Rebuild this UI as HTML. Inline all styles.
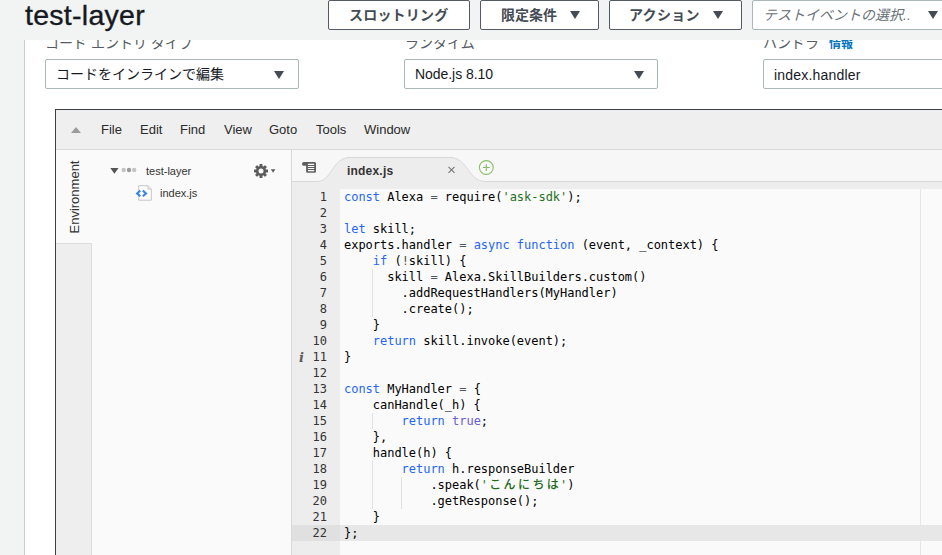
<!DOCTYPE html>
<html lang="ja">
<head>
<meta charset="utf-8">
<title>test-layer</title>
<style>
*{box-sizing:border-box;margin:0;padding:0}
html,body{width:942px;height:555px;overflow:hidden;background:#f2f3f3}
body{position:relative;font-family:"Liberation Sans","Noto Sans CJK JP",sans-serif;color:#16191f}
.abs{position:absolute}
/* page panel */
#panel{left:24px;top:40px;width:930px;height:530px;background:#fff;border-left:1px solid #c9cfcf}
/* header */
#hdr{left:0;top:0;width:942px;height:40px;background:#f2f3f3}
#title{left:25px;top:-3px;font-size:28.5px;line-height:36px;color:#16191f;white-space:nowrap;letter-spacing:.28px;-webkit-text-stroke:.35px #16191f}
.btn{top:0;height:30px;background:#fff;border:1px solid #545b64;border-radius:2px;color:#444b54;font-weight:bold;font-size:14px;line-height:28px;white-space:nowrap}
.btn span{position:absolute;top:0}
.tri{position:absolute;width:0;height:0;border-left:5.5px solid transparent;border-right:5.5px solid transparent;border-top:8px solid #444b54}
.lbl{font-size:14px;line-height:20px;color:#545b64;white-space:nowrap}
.sel{height:30px;background:#fff;border:1px solid #aab7b8;border-radius:2px;font-size:14px;line-height:28px;white-space:nowrap;color:#16191f}
.sel span{position:absolute;top:0}
/* IDE */
#ide{left:55px;top:109px;width:900px;height:460px;background:#fafafa;border-left:1px solid #3a3f46;border-top:1px solid #3a3f46}
#menubar{left:0;top:0;width:900px;height:40px;background:#efefef;border-bottom:1px solid #d9d9d9}
.mi{top:12px;font-size:13px;line-height:16px;color:#2a2a2a;white-space:nowrap}
#envcol{left:0;top:40px;width:36px;height:420px;background:#eeeeee;border-right:1px solid #dcdcdc}
#envtab{left:0;top:0;width:36px;height:94px;background:#fafafa;border-bottom:1px solid #dcdcdc}
#envtxt{left:0;top:0;width:36px;height:94px}
#tree{left:36px;top:40px;width:200px;height:420px;background:#fafafa}
.tl{font-size:11px;line-height:14px;color:#333;white-space:nowrap}
#split{left:235px;top:40px;width:1px;height:420px;background:#d9d9d9}
#tabbar{left:236px;top:40px;width:664px;height:32px;background:#f7f7f7}
#edtop{left:236px;top:72px;width:664px;height:7px;background:#ededed}
#gutter{left:236px;top:79px;width:48px;height:381px;background:#ededed}
#code{left:284px;top:79px;width:616px;height:381px;background:#fafafa;border-top-left-radius:4px}
.mono{font-family:"DejaVu Sans Mono","Liberation Mono","Noto Sans CJK JP",monospace;font-size:12px;line-height:16px;white-space:pre;letter-spacing:-0.024px}
.ln{left:0;width:35px;height:16px;text-align:right;color:#333}
.cl{left:4px;height:16px;color:#000}
.k{color:#2466f2}
.s{color:#1f7021}
.c{color:#6a5bd6}
.o{color:#4a5560}
.ig{width:1px;background:#e0e0e0}
.j{display:inline-block;width:14.4px;text-align:center;letter-spacing:0;font-weight:500;color:#1c6a1c}
</style>
</head>
<body>
<div id="panel" class="abs"></div>

<!-- form row -->
<div class="abs lbl" style="left:45px;top:34px;transform:translateY(-.75px)">コード エントリ タイプ</div>
<div class="abs sel" style="left:45px;top:59px;width:254px"><span style="left:10px">コードをインラインで編集</span><i class="tri" style="left:228px;top:11px"></i></div>
<div class="abs lbl" style="left:405px;top:34px;transform:translateY(-.75px)">ランタイム</div>
<div class="abs sel" style="left:404px;top:59px;width:254px"><span style="left:10px;letter-spacing:-.05px">Node.js 8.10</span><i class="tri" style="left:229px;top:11px"></i></div>
<div class="abs lbl" style="left:763px;top:34px;transform:translateY(-.75px)">ハンドラ <b style="font-size:12px;color:#0073bb;margin-left:6px;position:relative;top:0px">情報</b></div>
<div class="abs sel" style="left:763px;top:59px;width:200px"><span style="left:10px;top:1px;letter-spacing:.2px">index.handler</span></div>

<!-- header (covers top of form row) -->
<div id="hdr" class="abs"></div>
<div id="title" class="abs">test-layer</div>
<div class="abs btn" style="left:328px;width:142px"><span style="left:20px;letter-spacing:.2px">スロットリング</span></div>
<div class="abs btn" style="left:480px;width:119px"><span style="left:20px">限定条件</span><i class="tri" style="left:89px;top:10px"></i></div>
<div class="abs btn" style="left:609px;width:133px"><span style="left:19px;letter-spacing:.3px">アクション</span><i class="tri" style="left:103px;top:10px"></i></div>
<div class="abs sel" style="left:752px;top:0;width:200px;color:#687078;font-style:italic"><span style="left:10px">テストイベントの選択..</span><i class="tri" style="left:175px;top:10px"></i></div>

<!-- IDE -->
<div id="ide" class="abs">
  <div id="menubar" class="abs">
    <i class="abs" style="left:15px;top:17px;width:0;height:0;border-left:5.500px solid transparent;border-right:5.500px solid transparent;border-bottom:6px solid #9c9c9c"></i>
    <div class="abs mi" style="left:45px">File</div>
    <div class="abs mi" style="left:84px">Edit</div>
    <div class="abs mi" style="left:124px">Find</div>
    <div class="abs mi" style="left:168px">View</div>
    <div class="abs mi" style="left:213px">Goto</div>
    <div class="abs mi" style="left:260px">Tools</div>
    <div class="abs mi" style="left:308px">Window</div>
  </div>
  <div id="envcol" class="abs">
    <div id="envtab" class="abs"></div>
    <svg id="envtxt" class="abs" width="36" height="94" viewBox="0 0 36 94"><text x="0" y="0" transform="translate(22.500 83.500) rotate(-90)" font-family="Liberation Sans, sans-serif" font-size="13" fill="#333">Environment</text></svg>
  </div>
  <div id="tree" class="abs">
    <svg class="abs" style="left:16px;top:14px" width="32" height="12" viewBox="0 0 32 12">
      <path d="M2.300 4h8.200l-4.100 5.800z" fill="#555"/>
      <circle cx="15.700" cy="6" r="2.200" fill="#c4c4c4"/><circle cx="21" cy="6" r="2.200" fill="#9a9a9a"/><circle cx="26.200" cy="6" r="2.200" fill="#c4c4c4"/>
    </svg>
    <div class="abs tl" style="left:54px;top:14px">test-layer</div>
    <svg class="abs" style="left:43px;top:35px" width="19" height="17" viewBox="0 0 19 17">
      <path d="M3.700 .700H13L16.300 4V15.200H3.700z" fill="#fdfdfd" stroke="#c6c6c6" stroke-width="1"/>
      <path d="M13 .700V4H16.300" fill="#ededed" stroke="#c6c6c6" stroke-width="1"/>
      <path d="M5.300 5.500L2.100 8.400l3.200 2.900M7.800 5.500L11 8.400l-3.200 2.900" fill="none" stroke="#3a86e6" stroke-width="2.100"/>
    </svg>
    <div class="abs tl" style="left:68px;top:36px">index.js</div>
    <svg class="abs" style="left:161px;top:13px" width="24" height="16" viewBox="0 0 24 16">
      <g fill="#5c5c5c"><circle cx="8" cy="8" r="5.050"/>
      <rect x="6.550" y="1" width="2.900" height="14" rx=".5"/><rect x="6.550" y="1" width="2.900" height="14" rx=".5" transform="rotate(45 8 8)"/><rect x="6.550" y="1" width="2.900" height="14" rx=".5" transform="rotate(90 8 8)"/><rect x="6.550" y="1" width="2.900" height="14" rx=".5" transform="rotate(135 8 8)"/></g>
      <circle cx="8" cy="8" r="2.500" fill="#fafafa"/>
      <path d="M17.800 6.200h4.600l-2.300 3.500z" fill="#5c5c5c"/>
    </svg>
  </div>
  <div id="split" class="abs"></div>
  <div id="tabbar" class="abs">
    <svg class="abs" style="left:0;top:0" width="664" height="32" viewBox="0 0 664 32">
      <path d="M25 32C40 32 40 7.500 58 7.500H158C176 7.500 176 32 193 32z" fill="#ededed"/>
      <path d="M0 31.500H25C40 31.500 40 7.500 58 7.500H158C176 7.500 176 31.500 193 31.500H664" fill="none" stroke="#d8d8d8" stroke-width="1"/>
      <path d="M11.900 12H22.500a1.500 1.500 0 0 1 1.500 1.500V21.300a1.500 1.500 0 0 1 -1.500 1.500H15.600a1.500 1.500 0 0 1 -1.500 -1.500V15.800H11.900a1.900 1.900 0 0 1 0 -3.800z" fill="#5e5e5e"/>
      <path d="M15.900 14.400h6.300M15.900 16.500h6.300M15.900 18.550h6.300M15.900 20.600h6.300" stroke="#f9f9f9" stroke-width="1.100" fill="none"/>
      <path d="M156.500 16.900l6 6m0-6l-6 6" stroke="#777" stroke-width="1.100" fill="none"/>
      <circle cx="194.300" cy="17.500" r="6.900" fill="#fbfbfb" stroke="#86bf68" stroke-width="1.100"/>
      <path d="M190.800 17.500h7M194.300 14v7" stroke="#86bf68" stroke-width="1.100"/>
    </svg>
    <div class="abs" style="left:55px;top:14px;font-size:12px;line-height:14px;font-weight:bold;color:#333;white-space:nowrap;letter-spacing:.2px">index.js</div>
  </div>
  <div id="edtop" class="abs"></div>
  <div id="gutter" class="abs mono">
    <div class="abs" style="left:0;top:336px;width:48px;height:16px;background:#e0e0e0"></div>
    <div class="abs" style="left:7px;top:161px;width:8px;height:16px;font-family:'DejaVu Serif','Liberation Serif',serif;font-style:italic;font-weight:bold;font-size:13px;line-height:16px;color:#5a5a5a;letter-spacing:0">i</div>
<div class="abs ln" style="top:0px">1</div>
<div class="abs ln" style="top:16px">2</div>
<div class="abs ln" style="top:32px">3</div>
<div class="abs ln" style="top:48px">4</div>
<div class="abs ln" style="top:64px">5</div>
<div class="abs ln" style="top:80px">6</div>
<div class="abs ln" style="top:96px">7</div>
<div class="abs ln" style="top:112px">8</div>
<div class="abs ln" style="top:128px">9</div>
<div class="abs ln" style="top:144px">10</div>
<div class="abs ln" style="top:160px">11</div>
<div class="abs ln" style="top:176px">12</div>
<div class="abs ln" style="top:192px">13</div>
<div class="abs ln" style="top:208px">14</div>
<div class="abs ln" style="top:224px">15</div>
<div class="abs ln" style="top:240px">16</div>
<div class="abs ln" style="top:256px">17</div>
<div class="abs ln" style="top:272px">18</div>
<div class="abs ln" style="top:288px">19</div>
<div class="abs ln" style="top:304px">20</div>
<div class="abs ln" style="top:320px">21</div>
<div class="abs ln" style="top:336px">22</div>
  </div>
  <div id="code" class="abs mono">
    <div class="abs" style="left:0;top:336px;width:616px;height:16px;background:#e7e7e7"></div>
    <i class="abs" style="left:580px;top:0;width:1px;height:381px;background:#e6e6e6"></i>
    <i class="abs ig" style="left:32px;top:80px;height:48px"></i>
    <i class="abs ig" style="left:32px;top:224px;height:16px"></i>
    <i class="abs ig" style="left:32px;top:272px;height:48px"></i>
    <i class="abs ig" style="left:61px;top:288px;height:32px"></i>
<div class="abs cl" style="top:0px"><span class="k">const</span> Alexa <span class="o">=</span> require(<span class="s">'ask-sdk'</span>);</div>
<div class="abs cl" style="top:32px"><span class="k">let</span> skill;</div>
<div class="abs cl" style="top:48px">exports.handler <span class="o">=</span> <span class="k">async</span> <span class="k">function</span> (event, _context) {</div>
<div class="abs cl" style="top:64px">    <span class="k">if</span> (<span class="o">!</span>skill) {</div>
<div class="abs cl" style="top:80px">      skill <span class="o">=</span> Alexa.SkillBuilders.custom()</div>
<div class="abs cl" style="top:96px">        .addRequestHandlers(MyHandler)</div>
<div class="abs cl" style="top:112px">        .create();</div>
<div class="abs cl" style="top:128px">    }</div>
<div class="abs cl" style="top:144px">    <span class="k">return</span> skill.invoke(event);</div>
<div class="abs cl" style="top:160px">}</div>
<div class="abs cl" style="top:192px"><span class="k">const</span> MyHandler <span class="o">=</span> {</div>
<div class="abs cl" style="top:208px">    canHandle(_h) {</div>
<div class="abs cl" style="top:224px">        <span class="k">return</span> <span class="c">true</span>;</div>
<div class="abs cl" style="top:240px">    },</div>
<div class="abs cl" style="top:256px">    handle(h) {</div>
<div class="abs cl" style="top:272px">        <span class="k">return</span> h.responseBuilder</div>
<div class="abs cl" style="top:288px">            .speak(<span class="s">'<span class="j">こ</span><span class="j">ん</span><span class="j">に</span><span class="j">ち</span><span class="j">は</span>'</span>)</div>
<div class="abs cl" style="top:304px">            .getResponse();</div>
<div class="abs cl" style="top:320px">    }</div>
<div class="abs cl" style="top:336px">};</div>
  </div>
</div>
</body>
</html>
